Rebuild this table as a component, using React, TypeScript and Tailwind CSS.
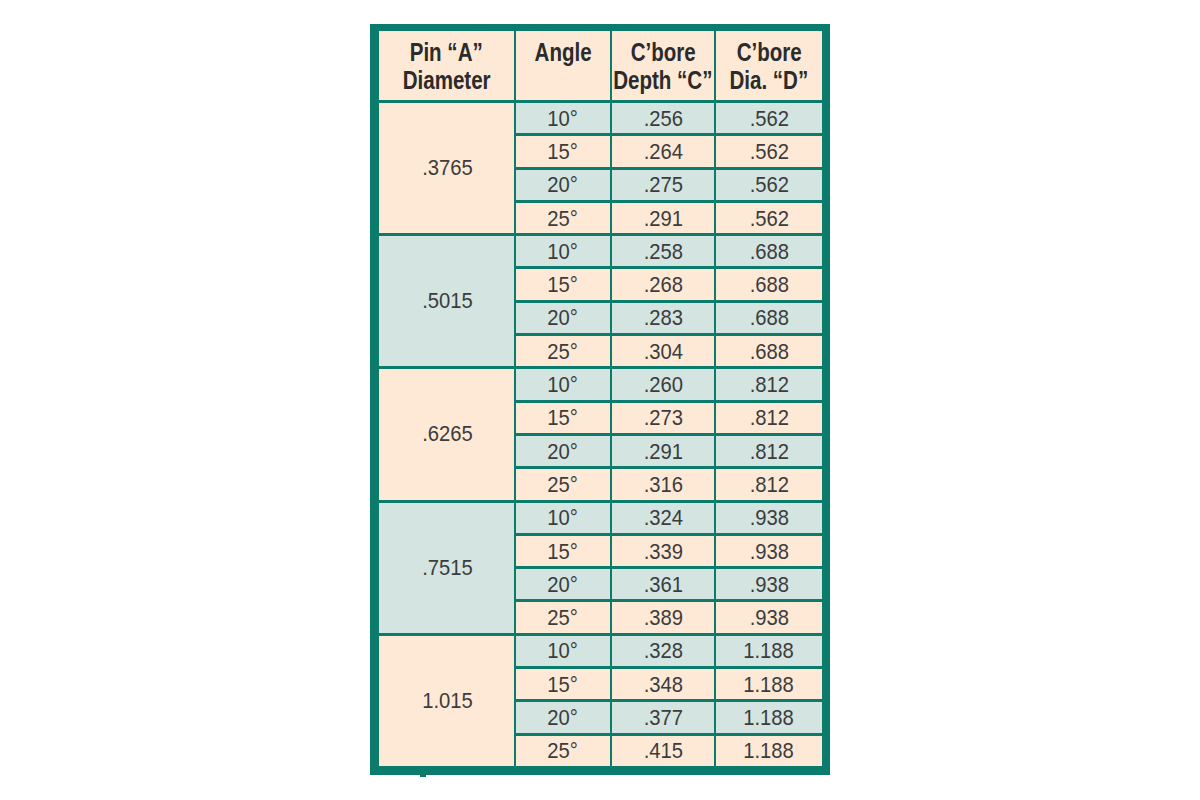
import React from "react";

const groups = [
  { pin: ".3765", rows: [["10°", ".256", ".562"], ["15°", ".264", ".562"], ["20°", ".275", ".562"], ["25°", ".291", ".562"]] },
  { pin: ".5015", rows: [["10°", ".258", ".688"], ["15°", ".268", ".688"], ["20°", ".283", ".688"], ["25°", ".304", ".688"]] },
  { pin: ".6265", rows: [["10°", ".260", ".812"], ["15°", ".273", ".812"], ["20°", ".291", ".812"], ["25°", ".316", ".812"]] },
  { pin: ".7515", rows: [["10°", ".324", ".938"], ["15°", ".339", ".938"], ["20°", ".361", ".938"], ["25°", ".389", ".938"]] },
  { pin: "1.015", rows: [["10°", ".328", "1.188"], ["15°", ".348", "1.188"], ["20°", ".377", "1.188"], ["25°", ".415", "1.188"]] },
];

const PEACH = "bg-[#fde9d6]";
const BLUE = "bg-[#d3e4e1]";

const headers = [
  ["Pin “A”", "Diameter"],
  ["Angle"],
  ["C’bore", "Depth “C”"],
  ["C’bore", "Dia. “D”"],
];

function Num({ children }: { children: React.ReactNode }) {
  return <span className="inline-block scale-x-[0.92] whitespace-nowrap">{children}</span>;
}

export default function App() {
  return (
    <div className="min-h-[800px] w-full bg-white flex flex-col items-center pt-[24px] font-['Liberation_Sans',Arial,sans-serif]">
      <div className="w-[460px] h-[751px] bg-[#0b7c6c] border-t-[7px] border-l-[9px] border-r-[8px] border-b-[9px] border-[#0b7c6c]">
        <div className="grid h-full grid-cols-[135px_94px_102px_1fr] grid-rows-[69px_repeat(20,1fr)] gap-x-[2px] gap-y-[3px]">
          {headers.map((h, i) => (
            <div
              key={i}
              className={`${PEACH} pt-[7px] flex flex-col items-center text-[26px] leading-[28px] font-bold text-[#2b2b2b]`}
            >
              {h.map((line, li) => (
                <span key={li} className="inline-block scale-x-[0.79] whitespace-nowrap">
                  {line}
                </span>
              ))}
            </div>
          ))}
          {groups.map((g, gi) => (
            <React.Fragment key={gi}>
              <div
                className={`${gi % 2 === 0 ? PEACH : BLUE} row-span-4 flex items-center justify-center pl-[2px] text-[22px] leading-none text-[#3c3c3c]`}
              >
                <Num>{g.pin}</Num>
              </div>
              {g.rows.map((r, ri) =>
                r.map((c, ci) => (
                  <div
                    key={`${ri}-${ci}`}
                    className={`${ri % 2 === 0 ? BLUE : PEACH} flex items-center justify-center pt-[1px] text-[22px] leading-none text-[#3c3c3c]`}
                  >
                    <Num>{c}</Num>
                  </div>
                ))
              )}
            </React.Fragment>
          ))}
        </div>
      </div>
      <div className="self-start ml-[420px] w-[6px] h-[2px] bg-[#0b7c6c]" />
    </div>
  );
}
